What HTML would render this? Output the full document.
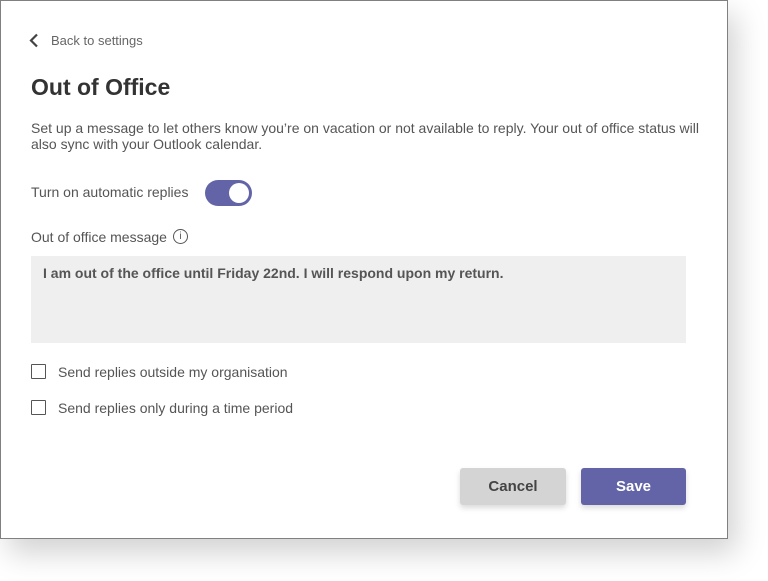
<!DOCTYPE html>
<html><head><style>
body{margin:0;width:768px;height:581px;background:#fff;font-family:"Liberation Sans",sans-serif;color:#555;position:relative;overflow:hidden}
.card{position:absolute;left:0;top:0;width:726px;height:537px;border:1px solid #808080;background:#fff;box-shadow:8px 14px 28px rgba(0,0,0,0.18)}
.a{position:absolute;white-space:nowrap}
.cb{position:absolute;left:31px;width:13px;height:13px;border:1.5px solid #555;border-radius:1px}
.btn{position:absolute;top:468px;width:106px;height:37px;border-radius:3px;font-weight:bold;font-size:15px;text-align:center;line-height:37px;box-shadow:0 3px 6px rgba(0,0,0,0.15)}
</style></head><body>
<div class="card"></div>
<svg class="a" style="left:28px;top:33px" width="12" height="15" viewBox="0 0 12 15"><path d="M9 1.5L3 7.5L9 13.5" stroke="#444" stroke-width="2.2" fill="none"/></svg>
<div class="a" style="left:51px;top:33px;font-size:13px;color:#666">Back to settings</div>
<div class="a" style="left:31px;top:74px;font-size:23px;font-weight:bold;color:#333">Out of Office</div>
<div class="a" style="left:31px;top:120px;font-size:14px;line-height:16px;color:#555">Set up a message to let others know you’re on vacation or not available to reply. Your out of office status will<br>also sync with your Outlook calendar.</div>
<div class="a" style="left:31px;top:184px;font-size:14px">Turn on automatic replies</div>
<div class="a" style="left:205px;top:180px;width:47px;height:26px;border-radius:13px;background:#6264a7"><div style="position:absolute;right:3px;top:3px;width:20px;height:20px;border-radius:50%;background:#fff"></div></div>
<div class="a" style="left:31px;top:229px;font-size:14px">Out of office message</div>
<div class="a" style="left:173px;top:229px;width:13px;height:13px;border:1.3px solid #555;border-radius:50%;font-size:10px;text-align:center;line-height:13px">i</div>
<div class="a" style="left:31px;top:256px;width:655px;height:87px;background:#efefef"></div>
<div class="a" style="left:43px;top:265px;font-size:14px;font-weight:bold;color:#555">I am out of the office until Friday 22nd. I will respond upon my return.</div>
<div class="cb" style="top:364px"></div>
<div class="a" style="left:58px;top:364px;font-size:14px">Send replies outside my organisation</div>
<div class="cb" style="top:400px"></div>
<div class="a" style="left:58px;top:400px;font-size:14px">Send replies only during a time period</div>
<div class="btn" style="left:460px;background:#d4d4d4;color:#444">Cancel</div>
<div class="btn" style="left:581px;width:105px;background:#6264a7;color:#fff">Save</div>
</body></html>
